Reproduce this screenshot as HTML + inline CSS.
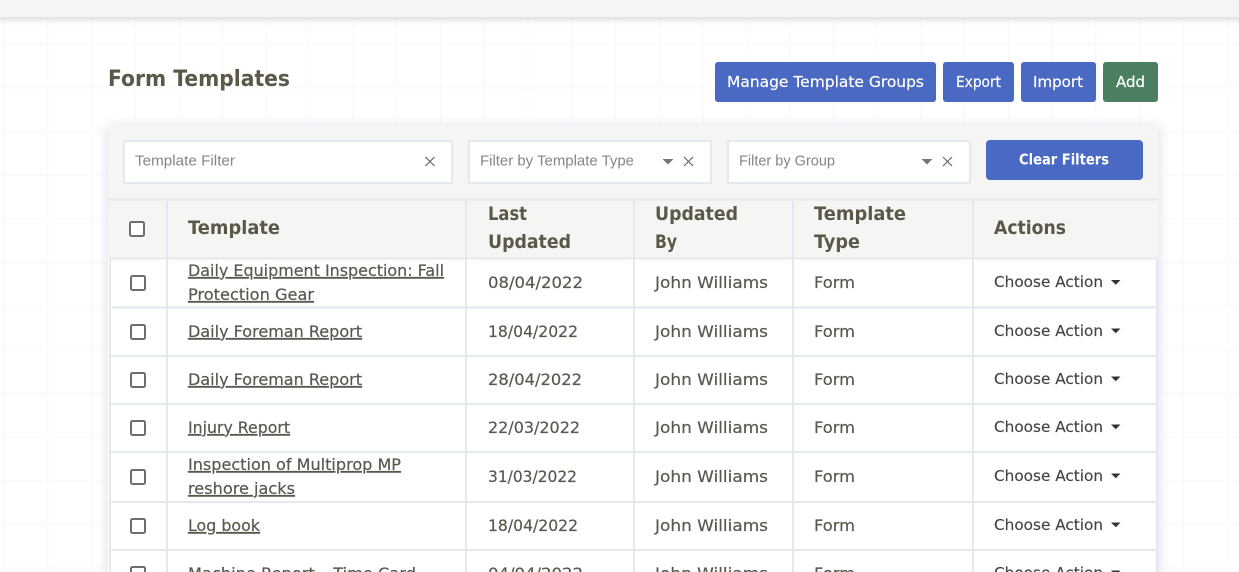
<!DOCTYPE html>
<html lang="en"><head><meta charset="utf-8"><title>Form Templates</title>
<style>
html,body{margin:0;padding:0;background:#fff;width:1239px;height:572px;overflow:hidden}
svg{display:block}
text{white-space:pre}
.p{font-family:"DejaVu Sans",sans-serif}
.r{font-family:"Liberation Sans",sans-serif;font-size:15px;fill:#858585}
.h{font-family:"DejaVu Sans",sans-serif;font-size:19px;font-weight:700;fill:#5b5848}
.c{font-family:"DejaVu Sans",sans-serif;font-size:16px;fill:#5a574e;stroke:#5a574e;stroke-width:.2}
.l{text-decoration:underline}
.a{font-family:"DejaVu Sans",sans-serif;font-size:15px;fill:#45433d;stroke:#45433d;stroke-width:.15}
.b{font-family:"DejaVu Sans",sans-serif;font-size:15.5px;fill:#fff;stroke:#fff;stroke-width:.2}
.cb{fill:#fff;stroke:#6e6e6e;stroke-width:2}
.x{stroke:#666;stroke-width:1.2;fill:none}
</style></head><body>
<svg width="1239" height="572" viewBox="0 0 1239 572" xmlns="http://www.w3.org/2000/svg">
<defs>
<pattern id="g" width="43.67" height="43.67" patternUnits="userSpaceOnUse" x="3" y="-0.5">
<path d="M1 0V43.67M0 1H43.67" stroke="#f8f9fa" stroke-width="1.3" fill="none"/>
</pattern>
<filter id="s" x="-5%" y="-10%" width="110%" height="120%"><feGaussianBlur stdDeviation="6"/></filter>
<filter id="t" x="-2%" y="-100%" width="104%" height="400%"><feGaussianBlur stdDeviation="4"/></filter>
</defs>
<rect width="1239" height="572" fill="#fff"/>
<rect width="1239" height="572" fill="url(#g)"/>
<rect x="-20" y="6" width="1279" height="13" fill="#cfd6dc" filter="url(#t)"/>
<rect width="1239" height="17" fill="#f5f5f3"/>

<text class="p" x="108" y="86" font-size="22" font-weight="700" fill="#5b5848" textLength="182" lengthAdjust="spacingAndGlyphs">Form Templates</text>

<rect x="715" y="62" width="221" height="40" rx="3" fill="#4a69c2"/>
<rect x="943" y="62" width="71" height="40" rx="3" fill="#4a69c2"/>
<rect x="1021" y="62" width="75" height="40" rx="3" fill="#4a69c2"/>
<rect x="1103" y="62" width="55" height="40" rx="3" fill="#4a8060"/>
<text class="b" x="727" y="87" textLength="197" lengthAdjust="spacingAndGlyphs">Manage Template Groups</text>
<text class="b" x="956" y="87" textLength="45" lengthAdjust="spacingAndGlyphs">Export</text>
<text class="b" x="1033" y="87" textLength="50" lengthAdjust="spacingAndGlyphs">Import</text>
<text class="b" x="1116" y="87" textLength="29" lengthAdjust="spacingAndGlyphs">Add</text>

<rect x="107" y="126" width="1052" height="460" fill="#dbe2e8" filter="url(#s)"/>
<rect x="108" y="125" width="1050" height="447" fill="#fff"/>
<path d="M108 199V128a3 3 0 0 1 3-3H1155a3 3 0 0 1 3 3V199Z" fill="#f5f5f3"/>

<rect x="124" y="141" width="328" height="42" fill="#fff" stroke="#e3e9ee" stroke-width="2"/>
<rect x="469" y="141" width="242" height="42" fill="#fff" stroke="#e3e9ee" stroke-width="2"/>
<rect x="728" y="141" width="242" height="42" fill="#fff" stroke="#e3e9ee" stroke-width="2"/>
<text class="r" x="135" y="165.500" textLength="100" lengthAdjust="spacingAndGlyphs">Template Filter</text>
<text class="r" x="480" y="165.500" textLength="154" lengthAdjust="spacingAndGlyphs">Filter by Template Type</text>
<text class="r" x="739" y="165.500" textLength="96" lengthAdjust="spacingAndGlyphs">Filter by Group</text>
<path class="x" d="M425.500 157l9 9m0-9l-9 9M684 157l9 9m0-9l-9 9M943 157l9 9m0-9l-9 9"/>
<path d="M662.500 159h11l-5.500 5.500ZM921.500 159h11l-5.500 5.500Z" fill="#777"/>
<rect x="986" y="140" width="157" height="40" rx="4" fill="#4a69c2"/>
<text class="p" x="1019" y="164.500" font-size="15" font-weight="700" fill="#fff" textLength="90" lengthAdjust="spacingAndGlyphs">Clear Filters</text>

<rect x="108" y="199" width="1050" height="59" fill="#f5f5f3"/>
<g fill="#e3e9ee">
<rect x="108" y="198.500" width="1050" height="2"/>
<rect x="109" y="257.500" width="1049" height="2"/>
<rect x="109" y="306.500" width="1049" height="2"/>
<rect x="109" y="355" width="1049" height="2"/>
<rect x="109" y="403" width="1049" height="2"/>
<rect x="109" y="451" width="1049" height="2"/>
<rect x="109" y="501" width="1049" height="2"/>
<rect x="109" y="549" width="1049" height="2"/>
<rect x="109" y="258" width="2" height="314"/>
<rect x="166" y="199" width="2" height="373"/>
<rect x="465" y="199" width="2" height="373"/>
<rect x="633" y="199" width="2" height="373"/>
<rect x="792" y="199" width="2" height="373"/>
<rect x="972" y="199" width="2" height="373"/>
<rect x="1156" y="258" width="2" height="314"/>
</g>

<rect class="cb" x="130" y="222" width="14" height="14" rx="1.500"/>
<text class="h" x="188" y="234" textLength="92" lengthAdjust="spacingAndGlyphs">Template</text>
<text class="h" x="488" y="220" textLength="39" lengthAdjust="spacingAndGlyphs">Last</text>
<text class="h" x="488" y="248" textLength="83" lengthAdjust="spacingAndGlyphs">Updated</text>
<text class="h" x="655" y="220" textLength="83" lengthAdjust="spacingAndGlyphs">Updated</text>
<text class="h" x="655" y="248" textLength="22" lengthAdjust="spacingAndGlyphs">By</text>
<text class="h" x="814" y="220" textLength="92" lengthAdjust="spacingAndGlyphs">Template</text>
<text class="h" x="814" y="248" textLength="46" lengthAdjust="spacingAndGlyphs">Type</text>
<text class="h" x="994" y="234" textLength="72" lengthAdjust="spacingAndGlyphs">Actions</text>

<!-- row 1 -->
<rect class="cb" x="131" y="276" width="14" height="14" rx="1.500"/>
<text class="c l" x="188" y="276" textLength="256" lengthAdjust="spacingAndGlyphs">Daily Equipment Inspection: Fall</text>
<text class="c l" x="188" y="300" textLength="126" lengthAdjust="spacingAndGlyphs">Protection Gear</text>
<text class="c" x="488" y="288" textLength="95" lengthAdjust="spacingAndGlyphs">08/04/2022</text>
<text class="c" x="655" y="288" textLength="113" lengthAdjust="spacingAndGlyphs">John Williams</text>
<text class="c" x="814" y="288" textLength="41" lengthAdjust="spacingAndGlyphs">Form</text>
<text class="a" x="994" y="287" textLength="109" lengthAdjust="spacingAndGlyphs">Choose Action</text>
<path d="M1111 280h9.500l-4.750 4.750Z" fill="#333"/>
<!-- row 2 -->
<rect class="cb" x="131" y="325" width="14" height="14" rx="1.500"/>
<text class="c l" x="188" y="337" textLength="174" lengthAdjust="spacingAndGlyphs">Daily Foreman Report</text>
<text class="c" x="488" y="337" textLength="90" lengthAdjust="spacingAndGlyphs">18/04/2022</text>
<text class="c" x="655" y="337" textLength="113" lengthAdjust="spacingAndGlyphs">John Williams</text>
<text class="c" x="814" y="337" textLength="41" lengthAdjust="spacingAndGlyphs">Form</text>
<text class="a" x="994" y="336" textLength="109" lengthAdjust="spacingAndGlyphs">Choose Action</text>
<path d="M1111 328.500h9.500l-4.750 4.750Z" fill="#333"/>
<!-- row 3 -->
<rect class="cb" x="131" y="373" width="14" height="14" rx="1.500"/>
<text class="c l" x="188" y="385" textLength="174" lengthAdjust="spacingAndGlyphs">Daily Foreman Report</text>
<text class="c" x="488" y="385" textLength="94" lengthAdjust="spacingAndGlyphs">28/04/2022</text>
<text class="c" x="655" y="385" textLength="113" lengthAdjust="spacingAndGlyphs">John Williams</text>
<text class="c" x="814" y="385" textLength="41" lengthAdjust="spacingAndGlyphs">Form</text>
<text class="a" x="994" y="384" textLength="109" lengthAdjust="spacingAndGlyphs">Choose Action</text>
<path d="M1111 376.500h9.500l-4.750 4.750Z" fill="#333"/>
<!-- row 4 -->
<rect class="cb" x="131" y="421" width="14" height="14" rx="1.500"/>
<text class="c l" x="188" y="433" textLength="102" lengthAdjust="spacingAndGlyphs">Injury Report</text>
<text class="c" x="488" y="433" textLength="92" lengthAdjust="spacingAndGlyphs">22/03/2022</text>
<text class="c" x="655" y="433" textLength="113" lengthAdjust="spacingAndGlyphs">John Williams</text>
<text class="c" x="814" y="433" textLength="41" lengthAdjust="spacingAndGlyphs">Form</text>
<text class="a" x="994" y="432" textLength="109" lengthAdjust="spacingAndGlyphs">Choose Action</text>
<path d="M1111 424.500h9.500l-4.750 4.750Z" fill="#333"/>
<!-- row 5 -->
<rect class="cb" x="131" y="470" width="14" height="14" rx="1.500"/>
<text class="c l" x="188" y="470" textLength="213" lengthAdjust="spacingAndGlyphs">Inspection of Multiprop MP</text>
<text class="c l" x="188" y="494" textLength="107" lengthAdjust="spacingAndGlyphs">reshore jacks</text>
<text class="c" x="488" y="482" textLength="89" lengthAdjust="spacingAndGlyphs">31/03/2022</text>
<text class="c" x="655" y="482" textLength="113" lengthAdjust="spacingAndGlyphs">John Williams</text>
<text class="c" x="814" y="482" textLength="41" lengthAdjust="spacingAndGlyphs">Form</text>
<text class="a" x="994" y="481" textLength="109" lengthAdjust="spacingAndGlyphs">Choose Action</text>
<path d="M1111 473.500h9.500l-4.750 4.750Z" fill="#333"/>
<!-- row 6 -->
<rect class="cb" x="131" y="519" width="14" height="14" rx="1.500"/>
<text class="c l" x="188" y="531" textLength="72" lengthAdjust="spacingAndGlyphs">Log book</text>
<text class="c" x="488" y="531" textLength="90" lengthAdjust="spacingAndGlyphs">18/04/2022</text>
<text class="c" x="655" y="531" textLength="113" lengthAdjust="spacingAndGlyphs">John Williams</text>
<text class="c" x="814" y="531" textLength="41" lengthAdjust="spacingAndGlyphs">Form</text>
<text class="a" x="994" y="530" textLength="109" lengthAdjust="spacingAndGlyphs">Choose Action</text>
<path d="M1111 522.500h9.500l-4.750 4.750Z" fill="#333"/>
<!-- row 7 -->
<rect class="cb" x="131" y="567" width="14" height="14" rx="1.500"/>
<text class="c l" x="188" y="579" textLength="228" lengthAdjust="spacingAndGlyphs">Machine Report – Time Card</text>
<text class="c" x="488" y="579" textLength="95" lengthAdjust="spacingAndGlyphs">04/04/2022</text>
<text class="c" x="655" y="579" textLength="113" lengthAdjust="spacingAndGlyphs">John Williams</text>
<text class="c" x="814" y="579" textLength="41" lengthAdjust="spacingAndGlyphs">Form</text>
<text class="a" x="994" y="578" textLength="109" lengthAdjust="spacingAndGlyphs">Choose Action</text>
<path d="M1111 570.500h9.500l-4.750 4.750Z" fill="#333"/>
</svg>
</body></html>
